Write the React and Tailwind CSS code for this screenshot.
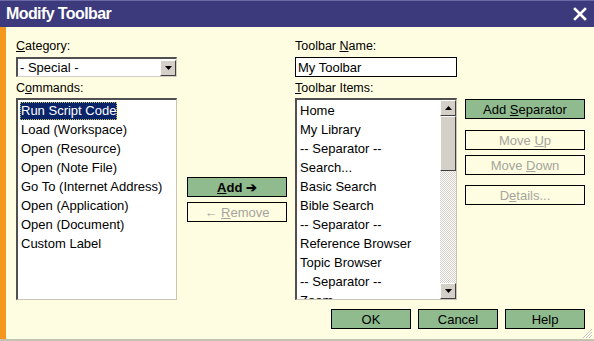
import React from 'react';

const commands = [
  'Run Script Code',
  'Load (Workspace)',
  'Open (Resource)',
  'Open (Note File)',
  'Go To (Internet Address)',
  'Open (Application)',
  'Open (Document)',
  'Custom Label',
];

const toolbarItems = [
  'Home',
  'My Library',
  '-- Separator --',
  'Search...',
  'Basic Search',
  'Bible Search',
  '-- Separator --',
  'Reference Browser',
  'Topic Browser',
  '-- Separator --',
  'Zoom',
];

function Tri({ up }) {
  return (
    <svg width="7" height="4" viewBox="0 0 7 4" className="block">
      <path d={up ? 'M0 4L3.5 0L7 4Z' : 'M0 0L7 0L3.5 4Z'} fill="#000" />
    </svg>
  );
}

function RaisedBox({ children, className = '' }) {
  return (
    <div
      className={`flex items-center justify-center bg-[#d4d0c8] border border-t-white border-l-white border-r-[#404040] border-b-[#404040] ${className}`}
    >
      {children}
    </div>
  );
}

function GreenButton({ children, bold }) {
  return (
    <button
      className={`block h-[20px] w-full border border-black bg-[#8fbb8f] text-black text-[13px] leading-none ${bold ? 'font-bold' : ''}`}
    >
      {children}
    </button>
  );
}

function DisabledButton({ children }) {
  return (
    <button className="block h-[20px] w-full border border-black bg-transparent text-[#a4a49c] text-[13px] leading-none">
      {children}
    </button>
  );
}

function Label({ children, className = '' }) {
  return <div className={`h-[13px] text-[12.5px] leading-[13px] text-black ${className}`}>{children}</div>;
}

export default function App() {
  return (
    <div className="relative w-[594px] h-[341px] flex flex-col bg-[#fffde1] font-['Liberation_Sans',Arial,sans-serif] overflow-hidden select-none">
      {/* title bar */}
      <div className="h-[27px] shrink-0 flex items-center justify-between bg-[#3c3a7c] border-t border-[#6a68a4] pl-[6px] pr-[6px]">
        <span className="text-white font-bold text-[16px] font-['Liberation_Sans_Narrow','Liberation_Sans',sans-serif] tracking-[-0.6px]">
          Modify Toolbar
        </span>
        <svg width="14" height="14" viewBox="0 0 14 14" className="mr-[1px]">
          <path d="M2 2L12 12M12 2L2 12" stroke="#fff" strokeWidth="2.6" strokeLinecap="square" />
        </svg>
      </div>

      {/* body */}
      <div className="flex flex-1 min-h-0">
        <div className="w-[6px] bg-[#f5961f]" />
        <div className="flex-1 flex flex-col pl-[10px] pt-[13px]">
          <div className="flex">
            {/* left column */}
            <div className="w-[161px] flex flex-col">
              <Label className="mb-[4px]">
                <u>C</u>ategory:
              </Label>
              <div className="h-[20px] flex items-center bg-white border-l-2 border-t-2 border-[#505050] border-r border-b border-r-[#d4d0c8] border-b-[#d4d0c8]">
                <span className="flex-1 pl-[2px] text-[13px] leading-none">- Special -</span>
                <RaisedBox className="w-[16px] h-[16px]">
                  <Tri />
                </RaisedBox>
              </div>
              <Label className="mt-[5px] mb-[3px]">
                C<u>o</u>mmands:
              </Label>
              <div className="h-[202px] bg-white border-l-2 border-t-2 border-[#505050] border-r border-b border-r-[#c8c4b8] border-b-[#c8c4b8] pl-[2px] pt-[1px] overflow-hidden">
                {commands.map((c, i) => (
                  <div key={c} className="h-[19px] text-[13px] leading-[19px] whitespace-nowrap">
                    {i === 0 ? (
                      <span className="inline-block h-[18px] leading-[18px] px-[1px] bg-[#0a246a] text-white outline-1 outline-dotted outline-[#c8c060] -outline-offset-1">
                        {c}
                      </span>
                    ) : (
                      <span className="pl-[1px]">{c}</span>
                    )}
                  </div>
                ))}
              </div>
            </div>

            {/* middle buttons */}
            <div className="w-[100px] ml-[10px] flex flex-col pt-[137px] gap-[5px]">
              <GreenButton bold>
                <u>A</u>dd ➔
              </GreenButton>
              <DisabledButton>
                ← <u>R</u>emove
              </DisabledButton>
            </div>

            {/* right column */}
            <div className="w-[162px] ml-[8px] flex flex-col">
              <Label className="mb-[4px]">
                Toolbar <u>N</u>ame:
              </Label>
              <div className="h-[20px] flex items-center bg-white border border-black pl-[2px] text-[13px] leading-none">
                My Toolbar
              </div>
              <Label className="mt-[5px] mb-[3px]">
                <u>T</u>oolbar Items:
              </Label>
              <div className="h-[202px] flex bg-white border-l-2 border-t-2 border-[#505050] border-r border-b border-r-[#c8c4b8] border-b-[#c8c4b8] overflow-hidden">
                <div className="flex-1 pl-[3px] pt-[1px] overflow-hidden">
                  {toolbarItems.map((t, i) => (
                    <div key={i} className="h-[19px] text-[13px] leading-[19px] whitespace-nowrap">
                      {t}
                    </div>
                  ))}
                </div>
                <div className="w-[16px] flex flex-col">
                  <RaisedBox className="h-[16px]">
                    <Tri up />
                  </RaisedBox>
                  <RaisedBox className="h-[55px]" />
                  <div className="flex-1 bg-[repeating-conic-gradient(#d4d0c8_0_25%,#ffffff_0_50%)] bg-[length:2px_2px]" />
                  <RaisedBox className="h-[16px]">
                    <Tri />
                  </RaisedBox>
                </div>
              </div>
            </div>

            {/* right buttons */}
            <div className="w-[120px] ml-[8px] flex flex-col pt-[59px]">
              <GreenButton>
                Add <u>S</u>eparator
              </GreenButton>
              <div className="mt-[11px]">
                <DisabledButton>
                  Move <u>U</u>p
                </DisabledButton>
              </div>
              <div className="mt-[5px]">
                <DisabledButton>
                  Move <u>D</u>own
                </DisabledButton>
              </div>
              <div className="mt-[10px]">
                <DisabledButton>
                  D<u>e</u>tails...
                </DisabledButton>
              </div>
            </div>
          </div>

          {/* footer */}
          <div className="flex justify-end gap-[7px] pr-[9px] mt-[9px]">
            <div className="w-[80px]">
              <GreenButton>OK</GreenButton>
            </div>
            <div className="w-[80px]">
              <GreenButton>Cancel</GreenButton>
            </div>
            <div className="w-[80px]">
              <GreenButton>Help</GreenButton>
            </div>
          </div>
        </div>
      </div>
      <div className="h-[2px] shrink-0 bg-[#c4c2b0]" />

      {/* resize grip */}
      <svg width="11" height="11" viewBox="0 0 11 11" className="absolute right-[1px] bottom-[2px]">
        <path d="M10 1L1 10M10 4L4 10M10 7L7 10" stroke="#c0c0b8" strokeWidth="1" />
        <path d="M10 2L2 10M10 5L5 10M10 8L8 10" stroke="#ffffff" strokeWidth="1" />
      </svg>
    </div>
  );
}
